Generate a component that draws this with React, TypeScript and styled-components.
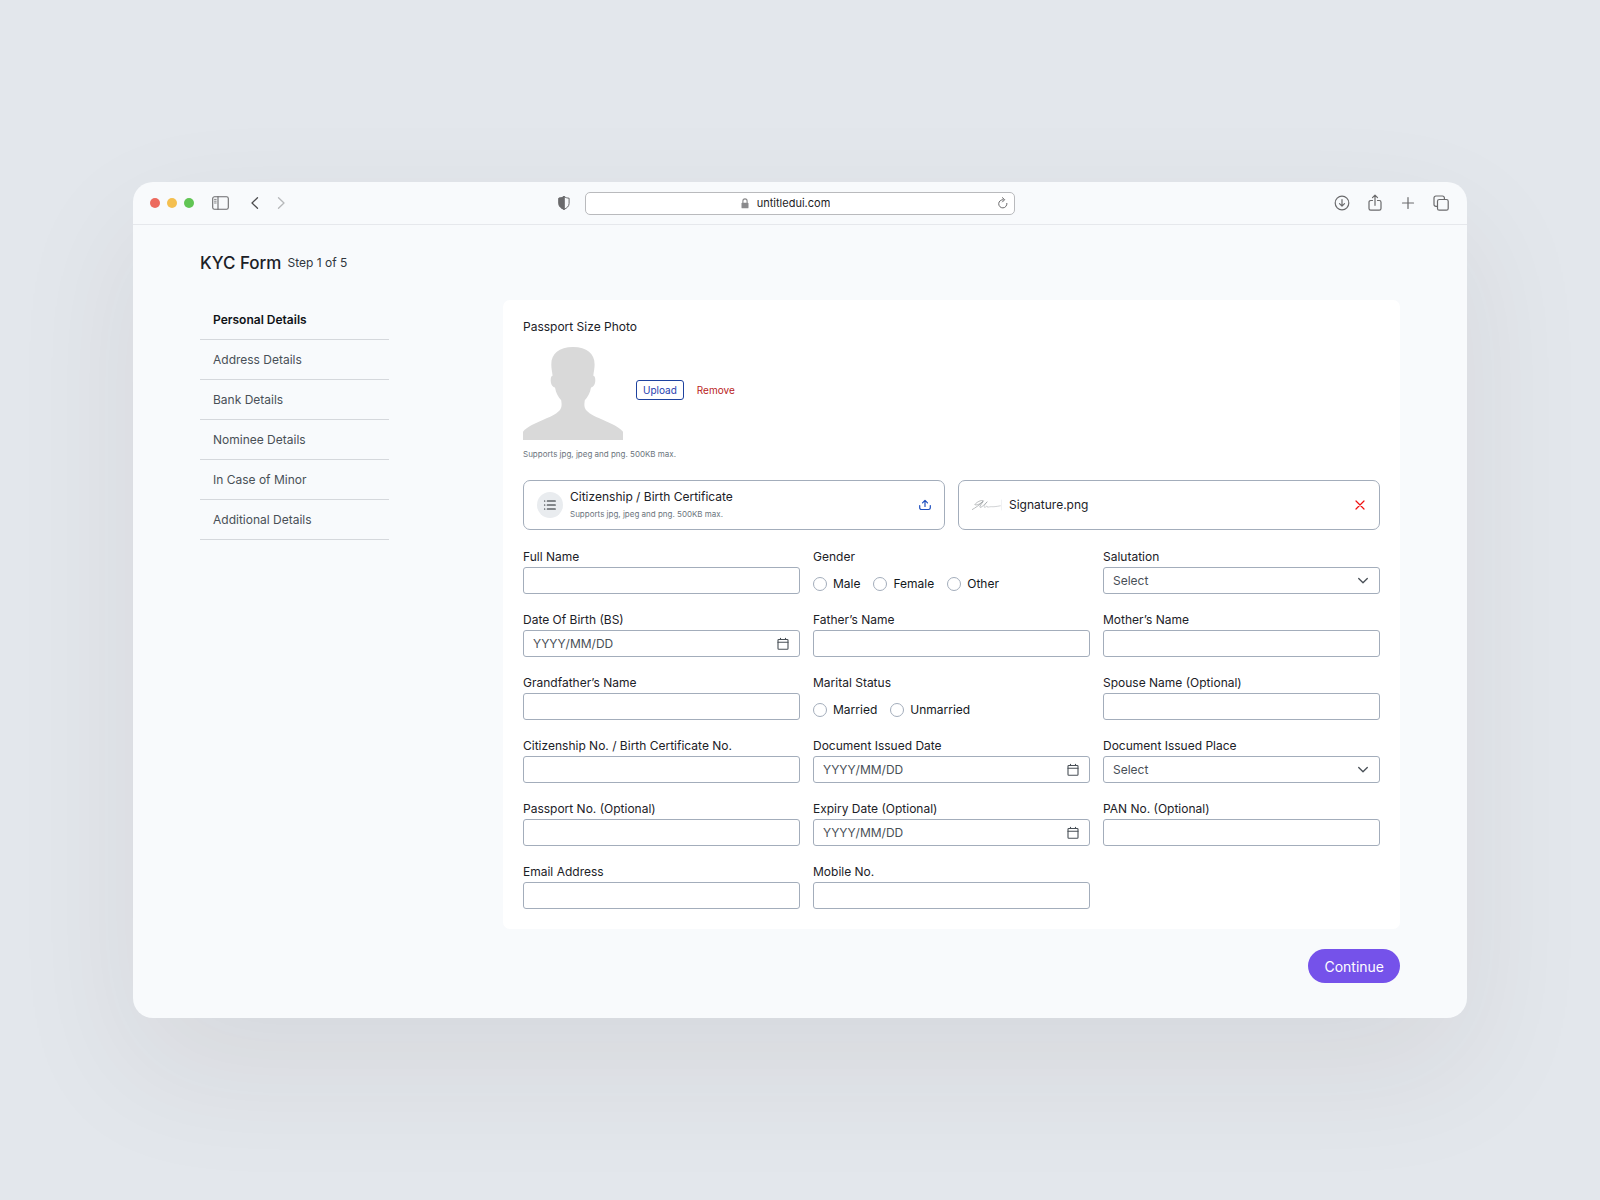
import React, { useId } from "react";
import styled, { createGlobalStyle } from "styled-components";

const GlobalStyle = createGlobalStyle`
  *, *::before, *::after { box-sizing: border-box; }
  body {
    margin: 0;
    background: #e3e7ec;
    color: #1c2127;
    font-family: Inter, "Liberation Sans", sans-serif;
    font-size: 12px;
    line-height: 14px;
  }
  button, input, select { font: inherit; color: inherit; margin: 0; }
  button { cursor: pointer; }
`;

/* ---------- Window ---------- */

const Desktop = styled.div`
  display: flex;
  align-items: center;
  min-height: 100vh;
  padding: 40px 133px;
`;

const Window = styled.div`
  flex: 1;
  min-width: 0;
  border-radius: 20px;
  background: #f8fafc;
  box-shadow: 0 50px 130px rgba(70, 35, 35, 0.08);
`;

const Toolbar = styled.header`
  display: grid;
  grid-template-columns: 1fr minmax(0, 430px) 1fr;
  align-items: center;
  column-gap: 15px;
  height: 43px;
  padding: 0 18px 0 17px;
  border-bottom: 1px solid #e6e8ec;
  color: #6a6a6c;
`;

const ToolbarSide = styled.div<{ $end?: boolean }>`
  display: flex;
  align-items: center;
  gap: ${(p) => (p.$end ? 17 : 18)}px;
  justify-content: ${(p) => (p.$end ? "flex-end" : "flex-start")};
`;

const Lights = styled.div`
  display: flex;
  gap: 7px;
`;

const Light = styled.button<{ $color: string }>`
  width: 10px;
  height: 10px;
  padding: 0;
  border: 0;
  border-radius: 50%;
  background: ${(p) => p.$color};
`;

const IconButton = styled.button<{ $tone?: string; $push?: boolean }>`
  display: flex;
  padding: 0;
  border: 0;
  background: none;
  color: ${(p) => p.$tone ?? "inherit"};
  margin-left: ${(p) => (p.$push ? "auto" : "0")};
`;

const History = styled.div`
  display: flex;
  gap: 10px;
`;

const AddressBar = styled.div`
  display: flex;
  align-items: center;
  height: 23px;
  padding: 0 6px;
  border: 1px solid #b9babd;
  border-radius: 5px;
  background: #fff;
`;

const AddressLabel = styled.label`
  display: flex;
  flex: 1;
  align-items: center;
  justify-content: center;
  gap: 8px;
  padding-right: 18px;
  color: #8a8a8c;
`;

const AddressInput = styled.input`
  field-sizing: content;
  padding: 0;
  border: 0;
  outline: 0;
  background: none;
  color: #1c1c1e;
  font-size: 11px;
`;

/* ---------- Page ---------- */

const Page = styled.main`
  padding: 28px 67px 35px;
`;

const Heading = styled.div`
  display: flex;
  align-items: center;
  gap: 6px;
  height: 20px;
  margin-bottom: 27px;
`;

const Title = styled.h1`
  margin: 0;
  font-size: 17px;
  line-height: 20px;
  font-weight: 500;
`;

const Step = styled.span`
  color: #30363d;
`;

const Columns = styled.div`
  display: flex;
  align-items: flex-start;
  justify-content: space-between;
  gap: 40px;
`;

const Steps = styled.nav`
  display: flex;
  flex-direction: column;
  flex: 0 0 189px;
`;

const StepLink = styled.a<{ $active?: boolean }>`
  padding: 13px 13px 12px;
  border-bottom: 1px solid #d5d8dc;
  color: ${(p) => (p.$active ? "#101317" : "#495057")};
  font-weight: ${(p) => (p.$active ? 600 : 400)};
  text-decoration: none;
`;

const FormColumn = styled.form`
  display: flex;
  flex-direction: column;
  align-items: flex-end;
  gap: 20px;
  flex: 0 1 897px;
`;

const Card = styled.section`
  display: flex;
  flex-direction: column;
  gap: 20px;
  width: 100%;
  padding: 20px;
  border-radius: 7px;
  background: #fff;
`;

const PhotoBlock = styled.div`
  display: flex;
  flex-direction: column;
`;

const PhotoRow = styled.div`
  display: flex;
  align-items: center;
  gap: 13px;
  margin: 6px 0 8px;
`;

const SmallButton = styled.button<{ $outlined?: boolean }>`
  height: 20px;
  padding: ${(p) => (p.$outlined ? "0 6px" : "0")};
  border: ${(p) => (p.$outlined ? "1px solid #1e429f" : "0")};
  border-radius: 3px;
  background: none;
  color: ${(p) => (p.$outlined ? "#1e40af" : "#b91c1c")};
  font-size: 10px;
  line-height: 12px;
`;

const Hint = styled.span`
  color: #6c757d;
  font-size: 8px;
  line-height: 12px;
`;

const Files = styled.div`
  display: grid;
  grid-template-columns: 1fr 1fr;
  gap: 13px;
`;

const FileCard = styled.div`
  display: flex;
  align-items: center;
  gap: 7px;
  height: 50px;
  padding: 0 13px;
  border: 1px solid #a3adbb;
  border-radius: 7px;
`;

const FileBadge = styled.span`
  display: grid;
  place-items: center;
  width: 26px;
  height: 26px;
  border-radius: 50%;
  background: #e9ecef;
`;

const FileText = styled.div`
  display: flex;
  flex-direction: column;
  gap: 4px;
`;

const Fields = styled.div`
  display: grid;
  grid-template-columns: repeat(3, 1fr);
  gap: 19px 13px;
`;

const Field = styled.div`
  display: flex;
  flex-direction: column;
  gap: 3px;
  min-width: 0;
`;

const Control = styled.div`
  display: grid;
  align-items: center;
  color: #495057;

  > * { grid-area: 1 / 1; }
  > svg {
    justify-self: end;
    margin-right: 10px;
    pointer-events: none;
  }
`;

const TextInput = styled.input`
  width: 100%;
  height: 27px;
  padding: 0 9px;
  border: 1px solid #a3adbb;
  border-radius: 3px;
  background: #fff;
  color: #495057;

  &::placeholder { color: #495057; opacity: 1; }
`;

const SelectInput = styled(TextInput).attrs({ as: "select" })`
  appearance: none;
`;

const RadioField = styled.fieldset`
  min-width: 0;
  margin: 0;
  padding: 0;
  border: 0;
`;

const Legend = styled.legend`
  padding: 0;
`;

const RadioRow = styled.div`
  display: flex;
  gap: 13px;
  padding-top: 13px;
`;

const RadioLabel = styled.label`
  display: flex;
  align-items: center;
  gap: 6px;
  color: #14181c;
`;

const Radio = styled.input`
  appearance: none;
  width: 14px;
  height: 14px;
  border: 1px solid #a3adbb;
  border-radius: 50%;
  background: #fff;

  &:checked { border: 4px solid #7552e9; }
`;

const ContinueButton = styled.button`
  height: 34px;
  padding: 0 16px;
  border: 0;
  border-radius: 17px;
  background: #7552ea;
  color: #fff;
  font-size: 14px;
  line-height: 17px;
`;

/* ---------- Icons ---------- */

type IconProps = { w: number; h: number; stroke?: number; children: React.ReactNode };

const Icon = ({ w, h, stroke = 1, children }: IconProps) => (
  <svg
    width={w}
    height={h}
    viewBox={`0 0 ${w} ${h}`}
    fill="none"
    stroke="currentColor"
    strokeWidth={stroke}
    strokeLinecap="round"
    strokeLinejoin="round"
    aria-hidden="true"
  >
    {children}
  </svg>
);

const SidebarIcon = () => (
  <Icon w={17} h={14} stroke={1.1}>
    <rect x="0.7" y="0.8" width="15.6" height="12.4" rx="1.8" />
    <path d="M6 0.8v12.4" />
    <path d="M2.5 3.4h1.7M2.5 5.2h1.7M2.5 7h1.7" strokeWidth="0.8" />
  </Icon>
);

const ShieldIcon = () => (
  <Icon w={12} h={14}>
    <path d="M6 0.6C4.4 1.7 2.5 2.1 0.9 2.2v5.2c0 2.9 2.2 4.7 5.1 6 2.9-1.3 5.1-3.1 5.1-6V2.2C9.5 2.1 7.6 1.7 6 0.6z" />
    <path d="M6 0.6C4.4 1.7 2.5 2.1 0.9 2.2v5.2c0 2.9 2.2 4.7 5.1 6z" fill="currentColor" />
  </Icon>
);

const LockIcon = () => (
  <Icon w={8} h={11} stroke={1.1}>
    <path d="M1.9 5V3a2.1 2.1 0 0 1 4.2 0v2" />
    <rect x="0.5" y="4.7" width="7" height="5.6" rx="0.9" fill="currentColor" stroke="none" />
  </Icon>
);

const ReloadIcon = () => (
  <Icon w={10} h={12}>
    <path d="M8.9 6.4A4.1 4.1 0 1 1 5.2 2.7" />
    <path d="M4.4 0.7l2.3 2-2.2 2.2" />
  </Icon>
);

const DownloadIcon = () => (
  <Icon w={16} h={16} stroke={1.2}>
    <circle cx="8" cy="8" r="6.8" />
    <path d="M8 4.6v6.3M5.5 8.6L8 11.1l2.5-2.5" />
  </Icon>
);

const ShareIcon = () => (
  <Icon w={16} h={18} stroke={1.2}>
    <path d="M5.5 6.5H3.7a1.7 1.7 0 0 0-1.7 1.7v6.3a1.7 1.7 0 0 0 1.7 1.7h8.6a1.7 1.7 0 0 0 1.7-1.7V8.2a1.7 1.7 0 0 0-1.7-1.7h-1.8" />
    <path d="M8 11.3V1.3M5.5 3.7L8 1.2l2.5 2.5" />
  </Icon>
);

const PlusIcon = () => (
  <Icon w={16} h={16} stroke={1.2}>
    <path d="M8 2.5v11M2.5 8h11" />
  </Icon>
);

const TabsIcon = () => (
  <Icon w={16} h={16} stroke={1.2}>
    <rect x="4.5" y="4.5" width="10.7" height="10.7" rx="1.8" />
    <path d="M4.4 11.3H2.9a1.9 1.9 0 0 1-1.9-1.9V2.9a1.9 1.9 0 0 1 1.9-1.9h6.6a1.9 1.9 0 0 1 1.9 1.9v1.5" />
  </Icon>
);

const ChevronIcon = ({ flip }: { flip?: boolean }) => (
  <Icon w={16} h={14} stroke={1.3}>
    <path d={flip ? "M5.5 1.7L11 7l-5.5 5.3" : "M10.5 1.7L5 7l5.5 5.3"} />
  </Icon>
);

const Avatar = () => (
  <svg width="100" height="100" viewBox="0 0 100 100" role="img" aria-label="Photo placeholder">
    <path
      fill="#d9d9d9"
      d="M50 7C36 7 28.3 13.5 28.3 24.5c0 3.5 .8 7.3 1.3 11.3-1.2 .1-1.9 1.5-1.9 4.5 0 4 1.8 6.8 4.3 7.2 .9 5.5 3.3 9.8 6.2 12.7 .7 4.7 .7 7.3-1.7 10.3-6.3 7.5-29 12-36.5 21.2V100h100v-8.3c-7.5-9.2-30.2-13.7-36.5-21.2-2.4-3-2.4-5.6-1.7-10.3 2.9-2.9 5.3-7.2 6.2-12.7 2.5-.4 4.3-3.2 4.3-7.2 0-3-.8-4.4-2-4.5 .5-4 1.3-7.8 1.3-11.3C71.6 13.5 64 7 50 7z"
    />
  </svg>
);

const ListIcon = () => (
  <Icon w={14} h={12} stroke={1.2}>
    <path d="M4.3 2h8M4.3 6h8M4.3 10h8M1.5 2h.3M1.5 6h.3M1.5 10h.3" />
  </Icon>
);

const UploadIcon = () => (
  <Icon w={12} h={12} stroke={1.2}>
    <path d="M6 7.5V1.5M3.5 3.8L6 1.3l2.5 2.5" />
    <path d="M0.7 6.5v2.3a1.7 1.7 0 0 0 1.7 1.7h7.2a1.7 1.7 0 0 0 1.7-1.7V6.5" />
  </Icon>
);

const SignatureMark = () => (
  <svg width="30" height="12" viewBox="1 0 30 12" fill="none" stroke="#8b9094" strokeWidth="0.6" strokeLinecap="round" aria-hidden="true">
    <path d="M1.2 10.6C4 9 9.500 5.500 12.500 1.800 10 .6 5.500 3.300 3.800 5.600 5.500 6.600 9 5 12 2.500 10.500 5 8.200 7.500 9 8.200 10 8.800 12.500 6.500 16 3" />
    <path d="M16 3c-1.800 2-3.500 4.700-2.600 5.300 1 .4 1.900-1.300 2.600-1.200 .7 .2-.2 1.200 .8 1.100 1.500-.2 2-.6 3.500-.5 2 .2 5-.1 9-.9" strokeWidth="0.4" />
    <path d="M30.5 1v10" stroke="#e3e5e8" strokeWidth="0.5" />
  </svg>
);

const CloseIcon = () => (
  <Icon w={12} h={12} stroke={1.2}>
    <path d="M2 2l8 8M10 2l-8 8" />
  </Icon>
);

const CalendarIcon = () => (
  <Icon w={14} h={14} stroke={1.1}>
    <rect x="2" y="2.5" width="10" height="9.7" rx="0.8" />
    <path d="M2 5.3h10M4.5 1.2v1.3M9.5 1.2v1.3" />
  </Icon>
);

const DownIcon = () => (
  <Icon w={14} h={14} stroke={1.3}>
    <path d="M2.7 4.5L7 8.8l4.3-4.3" />
  </Icon>
);

/* ---------- Form parts ---------- */

type FieldSpec = {
  label: string;
  kind?: "text" | "date" | "select" | "radio";
  options?: string[];
};

const fields: FieldSpec[] = [
  { label: "Full Name" },
  { label: "Gender", kind: "radio", options: ["Male", "Female", "Other"] },
  { label: "Salutation", kind: "select" },
  { label: "Date Of Birth (BS)", kind: "date" },
  { label: "Father’s Name" },
  { label: "Mother’s Name" },
  { label: "Grandfather’s Name" },
  { label: "Marital Status", kind: "radio", options: ["Married", "Unmarried"] },
  { label: "Spouse Name (Optional)" },
  { label: "Citizenship No. / Birth Certificate No." },
  { label: "Document Issued Date", kind: "date" },
  { label: "Document Issued Place", kind: "select" },
  { label: "Passport No. (Optional)" },
  { label: "Expiry Date (Optional)", kind: "date" },
  { label: "PAN No. (Optional)" },
  { label: "Email Address" },
  { label: "Mobile No." },
];

const FormField = ({ label, kind = "text", options = [] }: FieldSpec) => {
  const id = useId();

  if (kind === "radio") {
    return (
      <RadioField>
        <Legend>{label}</Legend>
        <RadioRow>
          {options.map((option) => (
            <RadioLabel key={option}>
              <Radio type="radio" name={id} value={option} />
              {option}
            </RadioLabel>
          ))}
        </RadioRow>
      </RadioField>
    );
  }

  return (
    <Field>
      <label htmlFor={id}>{label}</label>
      <Control>
        {kind === "select" ? (
          <SelectInput id={id}>
            <option>Select</option>
          </SelectInput>
        ) : (
          <TextInput id={id} type="text" placeholder={kind === "date" ? "YYYY/MM/DD" : undefined} />
        )}
        {kind === "select" && <DownIcon />}
        {kind === "date" && <CalendarIcon />}
      </Control>
    </Field>
  );
};

const steps = [
  "Personal Details",
  "Address Details",
  "Bank Details",
  "Nominee Details",
  "In Case of Minor",
  "Additional Details",
];

const supportText = "Supports jpg, jpeg and png. 500KB max.";

export default function App() {
  return (
    <>
      <GlobalStyle />
      <Desktop>
        <Window>
          <Toolbar>
            <ToolbarSide>
              <Lights>
                <Light $color="#ec6a5e" aria-label="Close" />
                <Light $color="#f4bf4f" aria-label="Minimize" />
                <Light $color="#61c554" aria-label="Maximize" />
              </Lights>
              <IconButton aria-label="Sidebar"><SidebarIcon /></IconButton>
              <History>
                <IconButton aria-label="Back" $tone="#4c4c4e"><ChevronIcon /></IconButton>
                <IconButton aria-label="Forward" $tone="#b6b8ba"><ChevronIcon flip /></IconButton>
              </History>
              <IconButton aria-label="Privacy report" $push><ShieldIcon /></IconButton>
            </ToolbarSide>
            <AddressBar>
              <AddressLabel>
                <LockIcon />
                <AddressInput type="text" aria-label="Address" defaultValue="untitledui.com" />
              </AddressLabel>
              <IconButton type="button" aria-label="Reload"><ReloadIcon /></IconButton>
            </AddressBar>
            <ToolbarSide $end>
              <IconButton aria-label="Downloads"><DownloadIcon /></IconButton>
              <IconButton aria-label="Share"><ShareIcon /></IconButton>
              <IconButton aria-label="New tab"><PlusIcon /></IconButton>
              <IconButton aria-label="Show tabs"><TabsIcon /></IconButton>
            </ToolbarSide>
          </Toolbar>

          <Page>
            <Heading>
              <Title>KYC Form</Title>
              <Step>Step 1 of 5</Step>
            </Heading>
            <Columns>
              <Steps aria-label="Form steps">
                {steps.map((step, i) => (
                  <StepLink key={step} href="#" $active={i === 0} aria-current={i === 0 ? "step" : undefined}>
                    {step}
                  </StepLink>
                ))}
              </Steps>

              <FormColumn onSubmit={(e) => e.preventDefault()}>
                <Card>
                  <PhotoBlock>
                    <span>Passport Size Photo</span>
                    <PhotoRow>
                      <Avatar />
                      <SmallButton type="button" $outlined>Upload</SmallButton>
                      <SmallButton type="button">Remove</SmallButton>
                    </PhotoRow>
                    <Hint>{supportText}</Hint>
                  </PhotoBlock>

                  <Files>
                    <FileCard>
                      <FileBadge><ListIcon /></FileBadge>
                      <FileText>
                        <span>Citizenship / Birth Certificate</span>
                        <Hint>{supportText}</Hint>
                      </FileText>
                      <IconButton type="button" aria-label="Upload certificate" $tone="#1d4fbf" $push>
                        <UploadIcon />
                      </IconButton>
                    </FileCard>
                    <FileCard>
                      <SignatureMark />
                      <span>Signature.png</span>
                      <IconButton type="button" aria-label="Remove signature" $tone="#f01010" $push>
                        <CloseIcon />
                      </IconButton>
                    </FileCard>
                  </Files>

                  <Fields>
                    {fields.map((field) => (
                      <FormField key={field.label} {...field} />
                    ))}
                  </Fields>
                </Card>
                <ContinueButton type="submit">Continue</ContinueButton>
              </FormColumn>
            </Columns>
          </Page>
        </Window>
      </Desktop>
    </>
  );
}
